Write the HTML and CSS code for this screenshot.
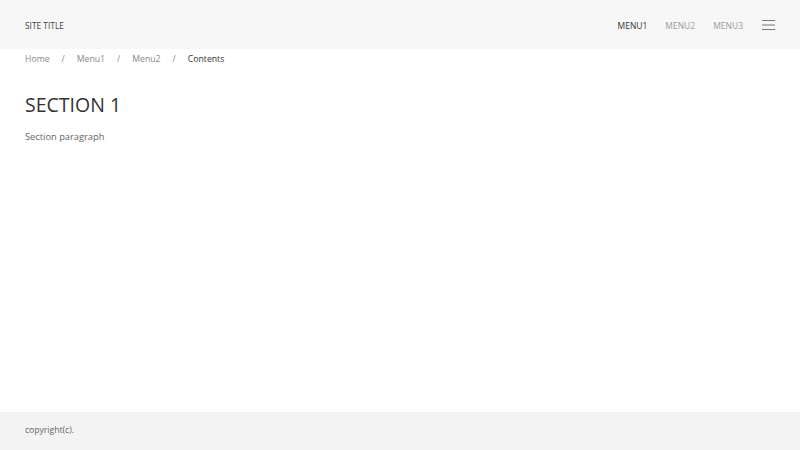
FILE: index.html
```html
<!DOCTYPE html>
<html lang="en">
<head>
<meta charset="utf-8">
<title>Site</title>
<link rel="stylesheet" href="styles.css">
</head>
<body>
<div class="page">
  <header class="header">
    <div class="site-title">SITE TITLE</div>
    <nav class="nav">
      <a class="nav-item active">MENU1</a>
      <a class="nav-item">MENU2</a>
      <a class="nav-item">MENU3</a>
      <span class="burger" aria-label="menu">
        <svg width="13" height="10" viewBox="0 0 13 10"><path d="M0 0.5H13M0 5H13M0 9.5H13" stroke="#777" stroke-width="1"/></svg>
      </span>
    </nav>
  </header>
  <ol class="breadcrumb">
    <li class="crumb">Home</li>
    <li class="sep">/</li>
    <li class="crumb">Menu1</li>
    <li class="sep">/</li>
    <li class="crumb">Menu2</li>
    <li class="sep">/</li>
    <li class="crumb current">Contents</li>
  </ol>
  <main class="main">
    <h1 class="section-title">SECTION 1</h1>
    <p class="section-text">Section paragraph</p>
  </main>
  <footer class="footer">copyright(c).</footer>
</div>
</body>
</html>
```
FILE: styles.css
```css
* { box-sizing: border-box; }
html, body { margin: 0; padding: 0; }
body {
  font-family: "Open Sans", "Noto Sans", sans-serif;
  color: #333;
  background: #fff;
}
.page {
  display: flex;
  flex-direction: column;
  height: 450px;
}
.header {
  height: 49px;
  background: #f7f7f7;
  display: flex;
  align-items: center;
  justify-content: space-between;
  padding: 1px 25px 0;
}
.site-title {
  font-size: 8.4px;
  color: #444;
}
.nav {
  display: flex;
  align-items: center;
  gap: 18px;
}
.nav-item {
  font-size: 8.5px;
  color: #999;
}
.nav-item.active { color: #333; }
.nav-item + .burger { margin-left: 1px; }
.burger {
  display: flex;
}
.breadcrumb {
  list-style: none;
  margin: 0;
  padding: 3px 25px 0;
  display: flex;
  gap: 12px;
  font-size: 8.7px;
  height: 17px;
  align-items: center;
}
.crumb { color: #888; }
.sep { color: #888; }
.crumb.current { color: #333; }
.main {
  flex: 1;
  padding: 0 25px;
}
.section-title {
  font-weight: 400;
  font-size: 19.5px;
  margin: 24px 0 0;
  line-height: 30px;
  color: #333;
}
.section-text {
  margin: 10px 0 0;
  font-size: 9.3px;
  color: #666;
}
.footer {
  height: 38px;
  background: #f3f3f3;
  padding: 0 25px 3px;
  display: flex;
  align-items: center;
  font-size: 8.6px;
  color: #666;
}
```
